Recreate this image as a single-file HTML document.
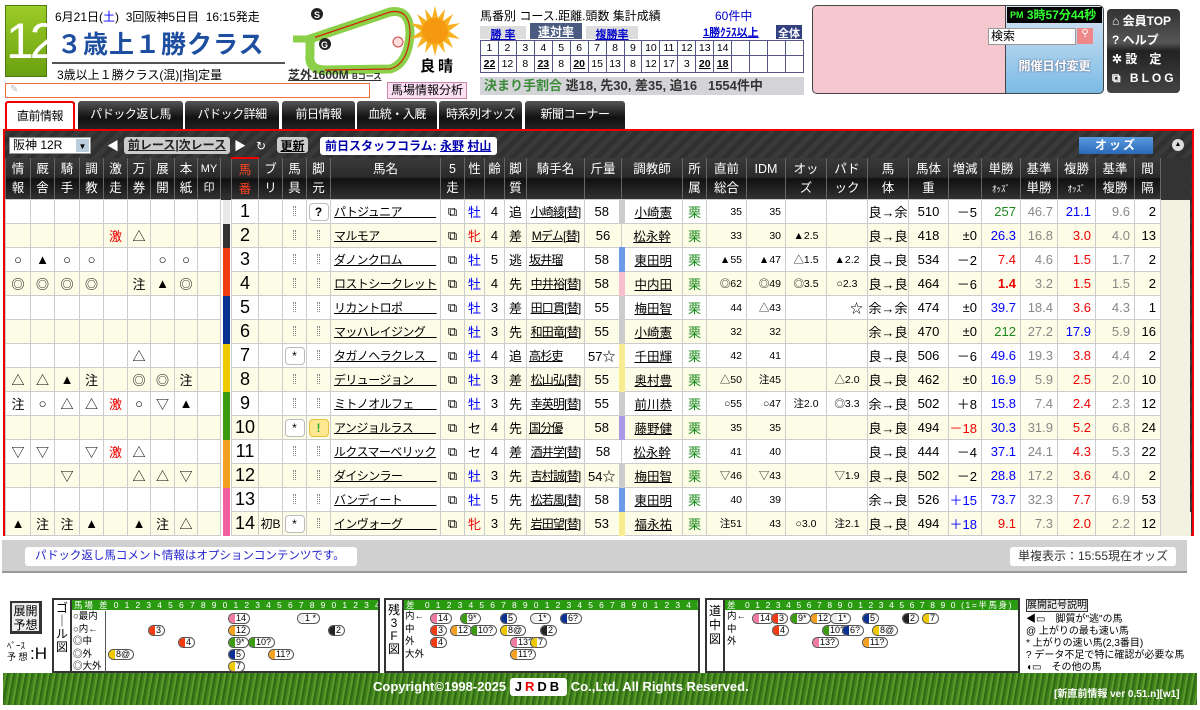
<!DOCTYPE html>
<html><head><meta charset="utf-8">
<style>
*{box-sizing:border-box;margin:0;padding:0}
body{width:1200px;height:710px;overflow:hidden;background:#fff;font-family:"Liberation Sans","Noto Sans CJK JP",sans-serif;font-size:12px;color:#000;position:relative}
.a{position:absolute}
#num{left:5px;top:5px;width:42px;height:72px;background:linear-gradient(#9ccc28,#6aa010);border:1px solid #4a7a10;color:#fff;font-size:50px;line-height:70px;text-align:center;letter-spacing:-4px;font-family:"Liberation Sans Narrow","Liberation Sans",sans-serif}
.tabs div{position:absolute;top:101px;height:28px;background:linear-gradient(#555,#111 60%,#222);color:#fff;font-size:12px;text-align:center;line-height:26px;border-radius:3px 3px 0 0;white-space:nowrap;letter-spacing:-0.5px}
table{border-collapse:collapse;table-layout:fixed}
#tb td{border:1px solid #ccc;text-align:center;font-size:13px;height:23.8px;padding:0;white-space:nowrap;overflow:hidden;background:#fff}
#tb tr:nth-child(even) td{background:#fdfce6}
#tb td.bar{border:none;background:#fff!important;padding:0}
#tb td.bar i{display:block;width:7px;height:24px;margin-left:2px}
#tb td.n{font-size:18px}
#tb td.nm{text-align:left;padding-left:3px;font-size:12px;letter-spacing:-0.6px}
#tb td.jk{font-size:12px;letter-spacing:-0.8px}
#tb td.tr{font-size:12.5px}
#tb td.r{text-align:right;padding-right:4px}
#tb td.sm{font-size:10.5px}
#tb td.rest{background:#f3f1e2!important;border:none}
.dot{display:inline-block;width:3px;height:10px;border-left:1px dotted #888;border-right:1px dotted #888}
.bx{display:inline-block;width:20px;height:18px;border:1px solid #bbb;border-radius:4px;font-size:12px;line-height:16px;background:#fff}
.hd td{color:#fff;font-size:12.5px;text-align:center;border-left:1px solid #666;line-height:19px;padding-top:2px;vertical-align:top;background:linear-gradient(#3a3a3a,#2a2a2a 45%,#111 50%,#333 100%);white-space:nowrap;overflow:hidden}
.b{color:#00f}.rd{color:#e00}.g{color:#1a8a1a}.gy{color:#888}
.chip{position:absolute;height:11px;border:1px solid #555;border-radius:6px;background:#fff;font-size:9px;line-height:9px;padding:0 3px 0 7px;overflow:hidden}
.chip:before{content:"";position:absolute;left:0;top:0;width:6px;height:11px;background:var(--c)}
.gh{position:absolute;top:600px;height:10px;background:#2a9a10;color:#fff;font-size:8.5px;line-height:10px;letter-spacing:1.9px;padding-left:2px;white-space:nowrap;overflow:hidden}
</style></head><body>

<div id="num" class="a">12</div>
<div class="a" style="left:55px;top:8px;font-size:12px">6月21日(<span class="b">土</span>)&nbsp; 3回阪神5日目&nbsp; 16:15発走</div>
<div class="a" style="left:57px;top:25px;font-size:25px;font-weight:bold;color:#1d4ea0;letter-spacing:1px">３歳上１勝クラス</div>
<div class="a" style="left:52px;top:62px;width:233px;height:2px;background:#555"></div>
<div class="a" style="left:57px;top:66px;font-size:12px">3歳以上１勝クラス(混)[指]定量</div>

<svg class="a" style="left:290px;top:4px" width="125" height="80" viewBox="0 0 125 80">
<path d="M20 35 L100 8 Q120 4 120 30 Q118 60 100 65 L35 66 Q18 66 20 50 Z" fill="none" stroke="#8cd04a" stroke-width="9"/>
<path d="M20 35 L100 8 Q120 4 120 30 Q118 60 100 65 L35 66" fill="none" stroke="#cc2200" stroke-width="1.2"/>
<path d="M3 35 L25 35" stroke="#8cd04a" stroke-width="7"/>
<circle cx="27" cy="10" r="6" fill="#222"/><text x="24" y="14" fill="#fff" font-size="9" font-weight="bold">S</text>
<circle cx="35" cy="40" r="6" fill="#222"/><text x="31" y="44" fill="#fff" font-size="9" font-weight="bold">G</text>
<circle cx="108" cy="38" r="5" fill="#fdd" stroke="#c44"/>
</svg>
<div class="a" style="left:288px;top:66px;font-size:12px;text-decoration:underline;font-weight:bold;color:#333">芝外1600M <span style="font-size:8px">Bコース</span></div>
<svg class="a" style="left:410px;top:6px" width="50" height="50" viewBox="0 0 50 50">
<polygon points="25,0 28,12 35,3 33,15 43,8 38,19 50,17 39,25 50,33 38,31 43,42 33,35 35,47 28,38 25,50 22,38 15,47 17,35 7,42 12,31 0,33 11,25 0,17 12,19 7,8 17,15 15,3 22,12" fill="#f7b020"/>
<circle cx="25" cy="25" r="13" fill="#f59a10"/></svg>
<div class="a" style="left:420px;top:55px;font-size:15px;font-weight:bold;letter-spacing:3px">良晴</div>
<div class="a" style="left:5px;top:83px;width:365px;height:15px;border:1px solid #f07040;color:#bbb;font-size:10px;padding-left:4px">✎</div>
<div class="a" style="left:387px;top:82px;width:80px;height:17px;background:#fbe0f4;border:1px solid #c8a;font-size:12px;text-align:center;line-height:15px">馬場情報分析</div>

<div class="a" style="left:480px;top:7px;font-size:12px">馬番別 コース.距離.頭数 集計成績</div>
<div class="a" style="left:715px;top:7px;font-size:12px;color:#00c">60件中</div>
<div class="a" style="left:480px;top:26px;width:46px;height:13px;background:#ddd;color:#00c;text-align:center;font-size:11px;text-decoration:underline;font-weight:bold">勝 率</div>
<div class="a" style="left:530px;top:23px;width:52px;height:16px;background:#4a5a80;color:#fff;text-align:center;font-size:12px;text-decoration:underline;font-weight:bold">連対率</div>
<div class="a" style="left:586px;top:26px;width:52px;height:13px;background:#ddd;color:#00c;text-align:center;font-size:11px;text-decoration:underline;font-weight:bold">複勝率</div>
<div class="a" style="left:703px;top:24px;font-size:11px;color:#00c;text-decoration:underline;font-weight:bold">1勝ｸﾗｽ以上</div>
<div class="a" style="left:776px;top:25px;width:26px;height:14px;background:#334080;color:#fff;font-size:11px;font-weight:bold;text-align:center">全体</div>
<table class="a" style="left:480px;top:40px;width:324px;font-size:10.5px;text-align:center">
<tr style="height:15px"><td style="border:1px solid #558">1</td><td style="border:1px solid #558">2</td><td style="border:1px solid #558">3</td><td style="border:1px solid #558">4</td><td style="border:1px solid #558">5</td><td style="border:1px solid #558">6</td><td style="border:1px solid #558">7</td><td style="border:1px solid #558">8</td><td style="border:1px solid #558">9</td><td style="border:1px solid #558">10</td><td style="border:1px solid #558">11</td><td style="border:1px solid #558">12</td><td style="border:1px solid #558">13</td><td style="border:1px solid #558">14</td><td style="border:1px solid #558"></td><td style="border:1px solid #558"></td><td style="border:1px solid #558"></td><td style="border:1px solid #558"></td></tr>
<tr style="height:17px"><td style="border:1px solid #558"><b><u>22</u></b></td><td style="border:1px solid #558">12</td><td style="border:1px solid #558">8</td><td style="border:1px solid #558"><b><u>23</u></b></td><td style="border:1px solid #558">8</td><td style="border:1px solid #558"><b><u>20</u></b></td><td style="border:1px solid #558">15</td><td style="border:1px solid #558">13</td><td style="border:1px solid #558">8</td><td style="border:1px solid #558">12</td><td style="border:1px solid #558">17</td><td style="border:1px solid #558">3</td><td style="border:1px solid #558"><b><u>20</u></b></td><td style="border:1px solid #558"><b><u>18</u></b></td><td style="border:1px solid #558"></td><td style="border:1px solid #558"></td><td style="border:1px solid #558"></td><td style="border:1px solid #558"></td></tr></table>
<div class="a" style="left:480px;top:77px;width:324px;height:18px;background:#d4d4d8;font-size:13px;font-weight:bold;line-height:18px;padding-left:4px;color:#333"><span style="color:#3a8a3a">決まり手割合</span> 逃18, 先30, 差35, 追16&nbsp;&nbsp; 1554件中</div>

<div class="a" style="left:812px;top:5px;width:194px;height:89px;background:#f5c8d0;border:1px solid #444;border-radius:5px 0 0 5px"></div>
<div class="a" style="left:1005px;top:5px;width:99px;height:89px;background:linear-gradient(#d8e4f2,#7abbe6);border:1px solid #444;border-radius:0 5px 5px 0"></div>
<div class="a" style="left:1007px;top:7px;width:95px;height:16px;background:#000;color:#3f3;font-size:12px;font-weight:bold;line-height:16px;padding-left:3px"><span style="font-size:9px;vertical-align:top">PM</span> 3時57分44秒</div>
<div class="a" style="left:988px;top:28px;width:88px;height:17px;background:#fff;border:1px solid #999;font-size:12px;line-height:15px;padding-left:2px">検索</div>
<div class="a" style="left:1077px;top:28px;width:16px;height:16px;background:#e88;color:#fff;font-size:10px;text-align:center">⚲</div>
<div class="a" style="left:1005px;top:57px;width:99px;text-align:center;color:#fff;font-size:12px;font-weight:bold;text-shadow:0 0 2px #557">開催日付変更</div>
<div class="a" style="left:1107px;top:9px;width:73px;height:84px;background:linear-gradient(#333,#555 40%,#222 50%,#444);border-radius:4px;color:#fff;font-size:12px;font-weight:bold;line-height:19px;padding:3px 0 0 5px;white-space:nowrap">⌂ 会員TOP<br>? ヘルプ<br>✲ 設　定<br><span style="letter-spacing:3px">⧉ BLOG</span></div>

<div class="tabs">
<div style="left:5px;width:70px;background:#fff;color:#000;border:2px solid #e00;border-bottom:none;height:30px">直前情報</div>
<div style="left:78px;width:105px">パドック返し馬</div>
<div style="left:185px;width:94px">パドック詳細</div>
<div style="left:282px;width:73px">前日情報</div>
<div style="left:357px;width:80px">血統・入厩</div>
<div style="left:439px;width:83px">時系列オッズ</div>
<div style="left:525px;width:100px">新聞コーナー</div>
</div>

<div class="a" style="left:3px;top:129px;width:1191px;height:407px;border:2px solid #e00;background:repeating-linear-gradient(135deg,#3a3a3a 0 5px,#303030 5px 10px)"></div>
<div class="a" style="left:9px;top:137px;width:82px;height:17px;background:#fff;border:1px solid #999;font-size:12px;line-height:15px;padding-left:3px">阪神 12R <span style="position:absolute;right:1px;top:1px;width:13px;height:13px;background:#bcd;font-size:8px;text-align:center">▼</span></div>
<div class="a" style="left:107px;top:137px;color:#fff;font-size:12px">◀</div>
<div class="a" style="left:124px;top:137px;width:106px;height:17px;background:#ccc;border-radius:3px;font-size:12px;line-height:17px;text-align:center;font-weight:bold;color:#222;white-space:nowrap"><u>前レース</u>|<u>次レース</u></div>
<div class="a" style="left:234px;top:137px;color:#fff;font-size:12px">▶ &nbsp; ↻</div>
<div class="a" style="left:277px;top:137px;width:31px;height:16px;background:#ccc;border-radius:3px;font-size:12px;font-weight:bold;text-align:center"><u>更新</u></div>
<div class="a" style="left:320px;top:137px;width:177px;height:18px;background:#fff;border-radius:3px;font-size:12px;font-weight:bold;color:#00a;line-height:18px;padding-left:5px;white-space:nowrap">前日スタッフコラム: <u>永野</u> <u>村山</u></div>
<div class="a" style="left:1079px;top:137px;width:74px;height:17px;background:linear-gradient(#5a9ae0,#2a6ab8);color:#fff;font-size:12px;font-weight:bold;text-align:center;line-height:17px;letter-spacing:2px">オッズ</div>
<div class="a" style="left:1172px;top:139px;width:12px;height:12px;border-radius:6px;background:#ddd;font-size:7px;text-align:center;line-height:12px">▲</div>

<table class="a hd" style="left:5px;top:157px;width:1185px;height:42px">
<colgroup><col style="width:25px"><col style="width:24px"><col style="width:25px"><col style="width:24px"><col style="width:24px"><col style="width:23px"><col style="width:24px"><col style="width:23px"><col style="width:23px"><col style="width:11px"><col style="width:27px"><col style="width:24px"><col style="width:24px"><col style="width:24px"><col style="width:110px"><col style="width:24px"><col style="width:20px"><col style="width:20px"><col style="width:22px"><col style="width:58px"><col style="width:37px"><col style="width:61px"><col style="width:24px"><col style="width:40px"><col style="width:39px"><col style="width:41px"><col style="width:41px"><col style="width:41px"><col style="width:40px"><col style="width:33px"><col style="width:39px"><col style="width:37px"><col style="width:38px"><col style="width:39px"><col style="width:26px"><col style="width:30px"></colgroup>
<tr><td>情<br>報</td><td>厩<br>舎</td><td>騎<br>手</td><td>調<br>教</td><td>激<br>走</td><td>万<br>券</td><td>展<br>開</td><td>本<br>紙</td><td style="font-size:11px">MY<br>印</td><td></td><td style="color:#f42;border-top:2px solid #e00;border-bottom:2px solid #e00">馬<br>番</td><td>ブ<br>リ</td><td>馬<br>具</td><td>脚<br>元</td><td>馬名</td><td>5<br>走</td><td>性</td><td>齢</td><td>脚<br>質</td><td>騎手名</td><td>斤量</td><td>調教師</td><td>所<br>属</td><td>直前<br>総合</td><td>IDM</td><td>オッ<br>ズ</td><td>パド<br>ック</td><td>馬<br>体</td><td>馬体<br>重</td><td>増減</td><td>単勝<br><span style="font-size:9px">ｵｯｽﾞ</span></td><td>基準<br>単勝</td><td>複勝<br><span style="font-size:9px">ｵｯｽﾞ</span></td><td>基準<br>複勝</td><td>間<br>隔</td><td style="background:#333"></td></tr></table>

<table id="tb" class="a" style="left:5px;top:199px;width:1185px">
<colgroup><col style="width:25px"><col style="width:24px"><col style="width:25px"><col style="width:24px"><col style="width:24px"><col style="width:23px"><col style="width:24px"><col style="width:23px"><col style="width:23px"><col style="width:11px"><col style="width:27px"><col style="width:24px"><col style="width:24px"><col style="width:24px"><col style="width:110px"><col style="width:24px"><col style="width:20px"><col style="width:20px"><col style="width:22px"><col style="width:58px"><col style="width:37px"><col style="width:61px"><col style="width:24px"><col style="width:40px"><col style="width:39px"><col style="width:41px"><col style="width:41px"><col style="width:41px"><col style="width:40px"><col style="width:33px"><col style="width:39px"><col style="width:37px"><col style="width:38px"><col style="width:39px"><col style="width:26px"><col style="width:30px"></colgroup>
<tr><td></td><td></td><td></td><td></td><td></td><td></td><td></td><td></td><td></td><td class="bar"><i style="background:#e8e8e8"></i></td><td class="n">1</td><td></td><td><span class="dot"></span></td><td><span class="bx"><b>?</b></span></td><td class="nm"><u>パトジュニア　　　</u></td><td>⧉</td><td class="b">牡</td><td>4</td><td>追</td><td class="jk"><u>小崎綾[替]</u></td><td>58</td><td class="tr" style="border-left:6px solid #ccc"><u>小崎憲</u></td><td class="g">栗</td><td class="r sm">35</td><td class="r sm">35</td><td class="sm"></td><td class="sm"></td><td>良→余</td><td>510</td><td class="r">－5</td><td class="r g">257</td><td class="r gy">46.7</td><td class="r b">21.1</td><td class="r gy">9.6</td><td class="r">2</td><td class="rest"></td></tr>
<tr><td></td><td></td><td></td><td></td><td class="rd">激</td><td>△</td><td></td><td></td><td></td><td class="bar"><i style="background:#333"></i></td><td class="n">2</td><td></td><td><span class="dot"></span></td><td><span class="dot"></span></td><td class="nm"><u>マルモア　　　　　</u></td><td>⧉</td><td class="rd">牝</td><td>4</td><td>差</td><td class="jk"><u>Mデム[替]</u></td><td>56</td><td class="tr"><u>松永幹</u></td><td class="g">栗</td><td class="r sm">33</td><td class="r sm">30</td><td class="sm">▲2.5</td><td class="sm"></td><td>良→良</td><td>418</td><td class="r">±0</td><td class="r b">26.3</td><td class="r gy">16.8</td><td class="r rd">3.0</td><td class="r gy">4.0</td><td class="r">13</td><td class="rest"></td></tr>
<tr><td>○</td><td>▲</td><td>○</td><td>○</td><td></td><td></td><td>○</td><td>○</td><td></td><td class="bar"><i style="background:#f03c10"></i></td><td class="n">3</td><td></td><td><span class="dot"></span></td><td><span class="dot"></span></td><td class="nm"><u>ダノンクロム　　　</u></td><td>⧉</td><td class="b">牡</td><td>5</td><td>逃</td><td class="jk" style="text-align:left;padding-left:2px"><u>坂井瑠</u></td><td>58</td><td class="tr" style="border-left:6px solid #6a9ae8"><u>東田明</u></td><td class="g">栗</td><td class="r sm">▲55</td><td class="r sm">▲47</td><td class="sm">△1.5</td><td class="sm">▲2.2</td><td>良→良</td><td>534</td><td class="r">－2</td><td class="r rd">7.4</td><td class="r gy">4.6</td><td class="r rd">1.5</td><td class="r gy">1.7</td><td class="r">2</td><td class="rest"></td></tr>
<tr><td>◎</td><td>◎</td><td>◎</td><td>◎</td><td></td><td>注</td><td>▲</td><td>◎</td><td></td><td class="bar"><i style="background:#f03c10"></i></td><td class="n">4</td><td></td><td><span class="dot"></span></td><td><span class="dot"></span></td><td class="nm"><u>ロストシークレット</u></td><td>⧉</td><td class="b">牡</td><td>4</td><td>先</td><td class="jk"><u>中井裕[替]</u></td><td>58</td><td class="tr" style="border-left:6px solid #f8c0cc"><u>中内田</u></td><td class="g">栗</td><td class="r sm">◎62</td><td class="r sm">◎49</td><td class="sm">◎3.5</td><td class="sm">○2.3</td><td>良→良</td><td>464</td><td class="r">－6</td><td class="r rd"><b>1.4</b></td><td class="r gy">3.2</td><td class="r rd">1.5</td><td class="r gy">1.5</td><td class="r">2</td><td class="rest"></td></tr>
<tr><td></td><td></td><td></td><td></td><td></td><td></td><td></td><td></td><td></td><td class="bar"><i style="background:#0a3090"></i></td><td class="n">5</td><td></td><td><span class="dot"></span></td><td><span class="dot"></span></td><td class="nm"><u>リカントロポ　　　</u></td><td>⧉</td><td class="b">牡</td><td>3</td><td>差</td><td class="jk"><u>田口貫[替]</u></td><td>55</td><td class="tr" style="border-left:6px solid #ccc"><u>梅田智</u></td><td class="g">栗</td><td class="r sm">44</td><td class="r sm">△43</td><td class="sm"></td><td class="r">☆</td><td>余→余</td><td>474</td><td class="r">±0</td><td class="r b">39.7</td><td class="r gy">18.4</td><td class="r rd">3.6</td><td class="r gy">4.3</td><td class="r">1</td><td class="rest"></td></tr>
<tr><td></td><td></td><td></td><td></td><td></td><td></td><td></td><td></td><td></td><td class="bar"><i style="background:#0a3090"></i></td><td class="n">6</td><td></td><td><span class="dot"></span></td><td><span class="dot"></span></td><td class="nm"><u>マッハレイジング　</u></td><td>⧉</td><td class="b">牡</td><td>3</td><td>先</td><td class="jk"><u>和田竜[替]</u></td><td>55</td><td class="tr" style="border-left:6px solid #ccc"><u>小崎憲</u></td><td class="g">栗</td><td class="r sm">32</td><td class="r sm">32</td><td class="sm"></td><td class="sm"></td><td>余→良</td><td>470</td><td class="r">±0</td><td class="r g">212</td><td class="r gy">27.2</td><td class="r b">17.9</td><td class="r gy">5.9</td><td class="r">16</td><td class="rest"></td></tr>
<tr><td></td><td></td><td></td><td></td><td></td><td>△</td><td></td><td></td><td></td><td class="bar"><i style="background:#f0c800"></i></td><td class="n">7</td><td></td><td><span class="bx">*</span></td><td><span class="dot"></span></td><td class="nm"><u>タガノヘラクレス　</u></td><td>⧉</td><td class="b">牡</td><td>4</td><td>追</td><td class="jk" style="text-align:left;padding-left:2px"><u>高杉吏</u></td><td>57☆</td><td class="tr" style="border-left:6px solid #f8ec90"><u>千田輝</u></td><td class="g">栗</td><td class="r sm">42</td><td class="r sm">41</td><td class="sm"></td><td class="sm"></td><td>良→良</td><td>506</td><td class="r">－6</td><td class="r b">49.6</td><td class="r gy">19.3</td><td class="r rd">3.8</td><td class="r gy">4.4</td><td class="r">2</td><td class="rest"></td></tr>
<tr><td>△</td><td>△</td><td>▲</td><td>注</td><td></td><td>◎</td><td>◎</td><td>注</td><td></td><td class="bar"><i style="background:#f0c800"></i></td><td class="n">8</td><td></td><td><span class="dot"></span></td><td><span class="dot"></span></td><td class="nm"><u>デリュージョン　　</u></td><td>⧉</td><td class="b">牡</td><td>3</td><td>差</td><td class="jk"><u>松山弘[替]</u></td><td>55</td><td class="tr" style="border-left:6px solid #f8ec90"><u>奥村豊</u></td><td class="g">栗</td><td class="r sm">△50</td><td class="r sm">注45</td><td class="sm"></td><td class="sm">△2.0</td><td>良→良</td><td>462</td><td class="r">±0</td><td class="r b">16.9</td><td class="r gy">5.9</td><td class="r rd">2.5</td><td class="r gy">2.0</td><td class="r">10</td><td class="rest"></td></tr>
<tr><td>注</td><td>○</td><td>△</td><td>△</td><td class="rd">激</td><td>○</td><td>▽</td><td>▲</td><td></td><td class="bar"><i style="background:#3a9a10"></i></td><td class="n">9</td><td></td><td><span class="dot"></span></td><td><span class="dot"></span></td><td class="nm"><u>ミトノオルフェ　　</u></td><td>⧉</td><td class="b">牡</td><td>3</td><td>先</td><td class="jk"><u>幸英明[替]</u></td><td>55</td><td class="tr" style="border-left:6px solid #ccc"><u>前川恭</u></td><td class="g">栗</td><td class="r sm">○55</td><td class="r sm">○47</td><td class="sm">注2.0</td><td class="sm">◎3.3</td><td>余→良</td><td>502</td><td class="r">＋8</td><td class="r b">15.8</td><td class="r gy">7.4</td><td class="r rd">2.4</td><td class="r gy">2.3</td><td class="r">12</td><td class="rest"></td></tr>
<tr><td></td><td></td><td></td><td></td><td></td><td></td><td></td><td></td><td></td><td class="bar"><i style="background:#3a9a10"></i></td><td class="n">10</td><td></td><td><span class="bx">*</span></td><td><span class="bx" style="background:#fbe890;border-color:#e8c040;color:#3a3"><b>!</b></span></td><td class="nm"><u>アンジョルラス　　</u></td><td>⧉</td><td>セ</td><td>4</td><td>先</td><td class="jk" style="text-align:left;padding-left:2px"><u>国分優</u></td><td>58</td><td class="tr" style="border-left:6px solid #a89ae8"><u>藤野健</u></td><td class="g">栗</td><td class="r sm">35</td><td class="r sm">35</td><td class="sm"></td><td class="sm"></td><td>良→良</td><td>494</td><td class="r rd">－18</td><td class="r b">30.3</td><td class="r gy">31.9</td><td class="r rd">5.2</td><td class="r gy">6.8</td><td class="r">24</td><td class="rest"></td></tr>
<tr><td>▽</td><td>▽</td><td></td><td>▽</td><td class="rd">激</td><td>△</td><td></td><td></td><td></td><td class="bar"><i style="background:#f4a020"></i></td><td class="n">11</td><td></td><td><span class="dot"></span></td><td><span class="dot"></span></td><td class="nm"><u>ルクスマーベリック</u></td><td>⧉</td><td>セ</td><td>4</td><td>差</td><td class="jk"><u>酒井学[替]</u></td><td>58</td><td class="tr"><u>松永幹</u></td><td class="g">栗</td><td class="r sm">41</td><td class="r sm">40</td><td class="sm"></td><td class="sm"></td><td>良→良</td><td>444</td><td class="r">－4</td><td class="r b">37.1</td><td class="r gy">24.1</td><td class="r rd">4.3</td><td class="r gy">5.3</td><td class="r">22</td><td class="rest"></td></tr>
<tr><td></td><td></td><td>▽</td><td></td><td></td><td>△</td><td>△</td><td>▽</td><td></td><td class="bar"><i style="background:#f4a020"></i></td><td class="n">12</td><td></td><td><span class="dot"></span></td><td><span class="dot"></span></td><td class="nm"><u>ダイシンラー　　　</u></td><td>⧉</td><td class="b">牡</td><td>3</td><td>先</td><td class="jk"><u>吉村誠[替]</u></td><td>54☆</td><td class="tr" style="border-left:6px solid #ccc"><u>梅田智</u></td><td class="g">栗</td><td class="r sm">▽46</td><td class="r sm">▽43</td><td class="sm"></td><td class="sm">▽1.9</td><td>良→良</td><td>502</td><td class="r">－2</td><td class="r b">28.8</td><td class="r gy">17.2</td><td class="r rd">3.6</td><td class="r gy">4.0</td><td class="r">2</td><td class="rest"></td></tr>
<tr><td></td><td></td><td></td><td></td><td></td><td></td><td></td><td></td><td></td><td class="bar"><i style="background:#f060a0"></i></td><td class="n">13</td><td></td><td><span class="dot"></span></td><td><span class="dot"></span></td><td class="nm"><u>バンディート　　　</u></td><td>⧉</td><td class="b">牡</td><td>5</td><td>先</td><td class="jk"><u>松若風[替]</u></td><td>58</td><td class="tr" style="border-left:6px solid #6a9ae8"><u>東田明</u></td><td class="g">栗</td><td class="r sm">40</td><td class="r sm">39</td><td class="sm"></td><td class="sm"></td><td>余→良</td><td>526</td><td class="r b">＋15</td><td class="r b">73.7</td><td class="r gy">32.3</td><td class="r rd">7.7</td><td class="r gy">6.9</td><td class="r">53</td><td class="rest"></td></tr>
<tr><td>▲</td><td>注</td><td>注</td><td>▲</td><td></td><td>▲</td><td>注</td><td>△</td><td></td><td class="bar"><i style="background:#f060a0"></i></td><td class="n">14</td><td style="font-size:12px">初B</td><td><span class="bx">*</span></td><td><span class="dot"></span></td><td class="nm"><u>インヴォーグ　　　</u></td><td>⧉</td><td class="rd">牝</td><td>3</td><td>先</td><td class="jk"><u>岩田望[替]</u></td><td>53</td><td class="tr" style="border-left:6px solid #f8ec90"><u>福永祐</u></td><td class="g">栗</td><td class="r sm">注51</td><td class="r sm">43</td><td class="sm">○3.0</td><td class="sm">注2.1</td><td>良→良</td><td>494</td><td class="r b">＋18</td><td class="r rd">9.1</td><td class="r gy">7.3</td><td class="r rd">2.0</td><td class="r gy">2.2</td><td class="r">12</td><td class="rest"></td></tr>
</table>

<div class="a" style="left:2px;top:540px;width:1185px;height:33px;background:#d0d0d0;border-bottom:2px solid #999"></div>
<div class="a" style="left:25px;top:547px;width:332px;height:19px;background:#fff;border-radius:3px;color:#22c;font-size:11.5px;line-height:19px;padding-left:10px;white-space:nowrap;overflow:hidden">パドック返し馬コメント情報はオプションコンテンツです。</div>
<div class="a" style="left:1010px;top:547px;width:166px;height:19px;background:#fff;border-radius:3px;font-size:12px;line-height:19px;text-align:center;color:#333;white-space:nowrap">単複表示：15:55現在オッズ</div>

<div class="a" style="left:10px;top:601px;width:32px;height:33px;border:2px solid #333;border-right-width:3px;border-bottom-width:3px;background:#eee;font-size:12px;line-height:14px;text-align:center;padding-top:1px">展開<br>予想</div>
<div class="a" style="left:7px;top:641px;font-size:9px;line-height:11px">ﾍﾟｰｽ<br>予 想</div>
<div class="a" style="left:30px;top:644px;font-size:17px">:H</div>

<div class="a" style="left:52px;top:598px;width:328px;height:75px;border:2px solid #333;background:#fff"></div>
<div class="a" style="left:54px;top:600px;width:18px;height:71px;border-right:2px solid #333;font-size:12px;line-height:13px;text-align:center;padding-top:2px">ゴ<br>｜<br>ル<br>図</div>
<div class="gh" style="left:72px;width:306px">馬場 差 0 1 2 3 4 5 6 7 8 9 0 1 2 3 4 5 6 7 8 9 0 1 2 3 4 5 6</div>
<div class="a" style="left:73px;top:611px;font-size:9.5px;line-height:12.5px;border-right:1px solid #555;padding-right:3px">○最内<br>○内←<br>◎中<br>◎外<br>◎大外</div>
<span class="chip" style="left:228px;top:613px;--c:#f07aa0">14</span><span class="chip" style="left:297px;top:613px;--c:#eee">1 *</span>
<span class="chip" style="left:148px;top:625px;--c:#f03c10">3</span><span class="chip" style="left:228px;top:625px;--c:#f4a020">12</span><span class="chip" style="left:328px;top:625px;--c:#222">2</span>
<span class="chip" style="left:178px;top:637px;--c:#f03c10">4</span><span class="chip" style="left:228px;top:637px;--c:#3a9a10">9*</span><span class="chip" style="left:248px;top:637px;--c:#3a9a10">10?</span>
<span class="chip" style="left:108px;top:649px;--c:#f0c800">8@</span><span class="chip" style="left:228px;top:649px;--c:#0a3090">5</span><span class="chip" style="left:268px;top:649px;--c:#f4a020">11?</span>
<span class="chip" style="left:228px;top:661px;--c:#f0c800">7</span>

<div class="a" style="left:384px;top:598px;width:316px;height:75px;border:2px solid #333;background:#fff"></div>
<div class="a" style="left:386px;top:600px;width:18px;height:71px;border-right:2px solid #333;font-size:12px;line-height:13px;text-align:center;padding-top:4px">残<br>3<br>F<br>図</div>
<div class="gh" style="left:404px;width:294px">差 &nbsp;0 1 2 3 4 5 6 7 8 9 0 1 2 3 4 5 6 7 8 9 0 1 2 3 4 5 6</div>
<div class="a" style="left:405px;top:611px;font-size:9.5px;line-height:12.5px">内←<br>中<br>外<br>大外</div>
<span class="chip" style="left:430px;top:613px;--c:#f07aa0">14</span><span class="chip" style="left:460px;top:613px;--c:#3a9a10">9*</span><span class="chip" style="left:500px;top:613px;--c:#0a3090">5</span><span class="chip" style="left:530px;top:613px;--c:#eee">1*</span><span class="chip" style="left:560px;top:613px;--c:#0a3090">6?</span>
<span class="chip" style="left:430px;top:625px;--c:#f03c10">3</span><span class="chip" style="left:450px;top:625px;--c:#f4a020">12</span><span class="chip" style="left:470px;top:625px;--c:#3a9a10">10?</span><span class="chip" style="left:500px;top:625px;--c:#f0c800">8@</span><span class="chip" style="left:540px;top:625px;--c:#222">2</span>
<span class="chip" style="left:430px;top:637px;--c:#f03c10">4</span><span class="chip" style="left:510px;top:637px;--c:#f07aa0">13?</span><span class="chip" style="left:530px;top:637px;--c:#f0c800">7</span>
<span class="chip" style="left:510px;top:649px;--c:#f4a020">11?</span>

<div class="a" style="left:705px;top:598px;width:315px;height:75px;border:2px solid #333;background:#fff"></div>
<div class="a" style="left:707px;top:600px;width:18px;height:71px;border-right:2px solid #333;font-size:12px;line-height:14px;text-align:center;padding-top:4px">道<br>中<br>図</div>
<div class="gh" style="left:725px;width:293px;letter-spacing:1.6px">差 &nbsp;0 1 2 3 4 5 6 7 8 9 0 1 2 3 4 5 6 7 8 9 0 (1=半馬身)</div>
<div class="a" style="left:727px;top:611px;font-size:9.5px;line-height:12.5px">内←<br>中<br>外</div>
<span class="chip" style="left:752px;top:613px;--c:#f07aa0">14</span><span class="chip" style="left:771px;top:613px;--c:#f03c10">3</span><span class="chip" style="left:790px;top:613px;--c:#3a9a10">9*</span><span class="chip" style="left:810px;top:613px;--c:#f4a020">12</span><span class="chip" style="left:830px;top:613px;--c:#eee">1*</span><span class="chip" style="left:862px;top:613px;--c:#0a3090">5</span><span class="chip" style="left:902px;top:613px;--c:#222">2</span><span class="chip" style="left:922px;top:613px;--c:#f0c800">7</span>
<span class="chip" style="left:772px;top:625px;--c:#f03c10">4</span><span class="chip" style="left:822px;top:625px;--c:#3a9a10">10?</span><span class="chip" style="left:842px;top:625px;--c:#0a3090">6?</span><span class="chip" style="left:872px;top:625px;--c:#f0c800">8@</span>
<span class="chip" style="left:812px;top:637px;--c:#f07aa0">13?</span><span class="chip" style="left:862px;top:637px;--c:#f4a020">11?</span>

<div class="a" style="left:1026px;top:599px;width:62px;height:13px;border:1px solid #333;background:#eee;font-size:10px;line-height:11px;white-space:nowrap">展開記号説明</div>
<div class="a" style="left:1026px;top:614px;font-size:10px;line-height:12px;white-space:nowrap">◀▭　脚質が"逃"の馬<br>@ 上がりの最も速い馬<br>* 上がりの速い馬(2,3番目)<br>? データ不足で特に確認が必要な馬<br>◖▭　その他の馬</div>

<div class="a" style="left:3px;top:673px;width:1194px;height:32px;background:repeating-linear-gradient(100deg,#3f7f1c 0 2px,#5a9a2a 2px 4px,#2e6a14 4px 6px)"></div>
<div class="a" style="left:373px;top:678px;color:#fff;font-size:13px;font-weight:bold;line-height:18px;white-space:nowrap">Copyright©1998-2025 <span style="display:inline-block;background:#fff;color:#000;border-radius:3px;padding:0 5px;letter-spacing:3px">J<span style="color:#e00">R</span>DB</span> Co.,Ltd. All Rights Reserved.</div>
<div class="a" style="left:1054px;top:685px;color:#fff;font-size:10px;font-weight:bold;white-space:nowrap">[新直前情報 ver 0.51.n][w1]</div>
</body></html>
